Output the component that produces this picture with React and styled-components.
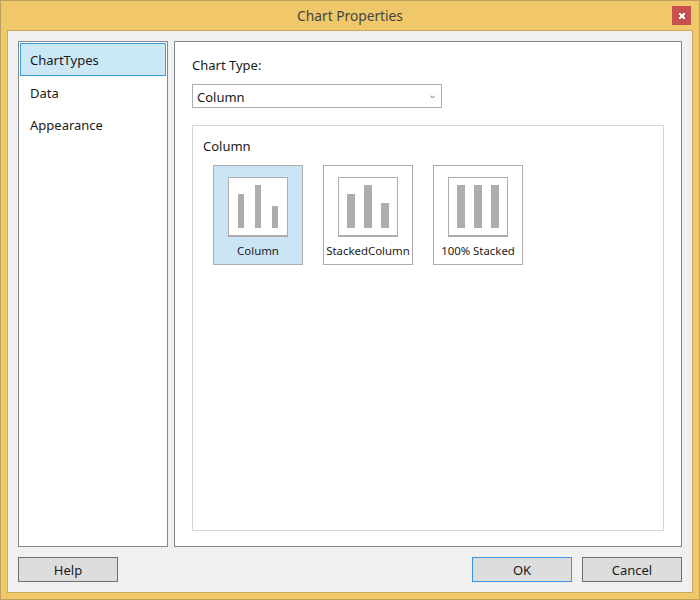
import React from "react";
import styled, { createGlobalStyle } from "styled-components";

const Global = createGlobalStyle`
  html, body { margin: 0; padding: 0; background: #f0c869; }
  * { box-sizing: border-box; }
`;

const Frame = styled.div`
  width: 700px; height: 600px;
  display: flex; flex-direction: column;
  background: #f0c869;
  border: 1px solid #bda25c;
  padding: 0 6px 6px 6px;
  font-family: "Noto Sans", "Open Sans", sans-serif;
  font-size: 13px;
  color: #1a1a1a;
`;
const TitleBar = styled.div`
  height: 29px; flex: none;
  display: flex; align-items: center; justify-content: center;
  position: relative;
  font-size: 13.75px; color: #444;
`;
const Close = styled.div`
  position: absolute; top: 5px; right: 2px;
  width: 19px; height: 19px;
  background: #c75050;
  display: flex; align-items: center; justify-content: center;
`;
const Client = styled.div`
  flex: 1; min-height: 0;
  display: flex; flex-direction: column; gap: 10px;
  background: #f0f0f0;
  border: 1px solid #c9a95c;
  padding: 10px;
`;
const Main = styled.div`
  flex: 1; min-height: 0;
  display: flex; gap: 6px;
`;
const Sidebar = styled.div`
  width: 150px; flex: none;
  background: #fff; border: 1px solid #828790;
  padding: 1px;
`;
const NavItem = styled.div`
  height: ${p => (p.$short ? "32px" : "33px")}; padding-left: 9px;
  display: flex; align-items: center;
  font-size: 13px;
  border: 1px solid ${p => (p.$active ? "#3a9fd6" : "transparent")};
  background: ${p => (p.$active ? "#cbe8f6" : "transparent")};
`;
const Panel = styled.div`
  flex: 1; min-width: 0;
  display: flex; flex-direction: column;
  background: #fff; border: 1px solid #828790;
  padding: 13px 17px 15px 17px;
`;
const FieldLabel = styled.div`
  height: 20px; line-height: 20px;
`;
const Combo = styled.div`
  width: 250px; height: 24px; margin-top: 9px; flex: none;
  display: flex; align-items: center; justify-content: space-between;
  border: 1px solid #acacac; padding: 1px 6px 0 4px;
`;
const Group = styled.div`
  flex: 1; margin-top: 17px;
  border: 1px solid #d5d5d5;
  padding: 10px 10px 0 10px;
`;
const GroupTitle = styled.div`
  height: 20px; line-height: 20px;
`;
const Cards = styled.div`
  display: flex; gap: 20px; margin: 9px 0 0 10px;
`;
const Card = styled.div`
  width: 90px; height: 100px;
  display: flex; flex-direction: column; align-items: center;
  padding-top: 11px;
  border: 1px solid #acacac;
  background: ${p => (p.$active ? "#cbe4f6" : "#fff")};
  font-size: 11.4px;
`;
const Thumb = styled.div`
  width: 60px; height: 60px;
  background: #fff;
  border: 1px solid #acacac; border-bottom-width: 2px;
`;
const CardLabel = styled.div`
  margin-top: 5px; height: 18px; line-height: 18px; white-space: nowrap;
`;
const Footer = styled.div`
  flex: none; display: flex; justify-content: space-between;
`;
const Actions = styled.div`
  display: flex; gap: 10px;
`;
const Button = styled.div`
  width: 100px; height: 25px;
  display: flex; align-items: center; justify-content: center;
  background: #dddddd;
  border: 1px solid ${p => (p.$focus ? "#3d94e6" : "#707070")};
  font-size: 13px;
`;

const Bars = ({ bars }) => (
  <svg width="58" height="57" viewBox="0 0 58 57" style={{ display: "block" }}>
    {bars.map(([x, w, y], i) => (
      <rect key={i} x={x} y={y} width={w} height={50 - y} fill="#adadad" />
    ))}
  </svg>
);

const charts = [
  { label: "Column", active: true, bars: [[9, 6, 16], [26, 6, 7], [43, 6, 28]] },
  { label: "StackedColumn", bars: [[8, 8, 16], [25, 8, 7], [42, 8, 25]] },
  { label: "100% Stacked", bars: [[8, 8, 7], [25, 8, 7], [42, 8, 7]] },
];

export default function App() {
  return (
    <Frame>
      <Global />
      <TitleBar>
        Chart Properties
        <Close>
          <svg width="6" height="6" viewBox="0 0 6 6" shapeRendering="crispEdges">
            <path d="M0 0h2v1h2V0h2v2H5v2h1v2H4V5H2v1H0V4h1V2H0z" fill="#fff" />
          </svg>
        </Close>
      </TitleBar>
      <Client>
        <Main>
          <Sidebar>
            <NavItem $active>ChartTypes</NavItem>
            <NavItem>Data</NavItem>
            <NavItem $short>Appearance</NavItem>
          </Sidebar>
          <Panel>
            <FieldLabel>Chart Type:</FieldLabel>
            <Combo>
              Column
              <svg width="5" height="4" viewBox="0 0 5 4">
                <path d="M0.3 0.6 L2.5 3 L4.7 0.6" fill="none" stroke="#707070" strokeWidth="1" />
              </svg>
            </Combo>
            <Group>
              <GroupTitle>Column</GroupTitle>
              <Cards>
                {charts.map(c => (
                  <Card key={c.label} $active={c.active}>
                    <Thumb><Bars bars={c.bars} /></Thumb>
                    <CardLabel>{c.label}</CardLabel>
                  </Card>
                ))}
              </Cards>
            </Group>
          </Panel>
        </Main>
        <Footer>
          <Button>Help</Button>
          <Actions>
            <Button $focus>OK</Button>
            <Button>Cancel</Button>
          </Actions>
        </Footer>
      </Client>
    </Frame>
  );
}
